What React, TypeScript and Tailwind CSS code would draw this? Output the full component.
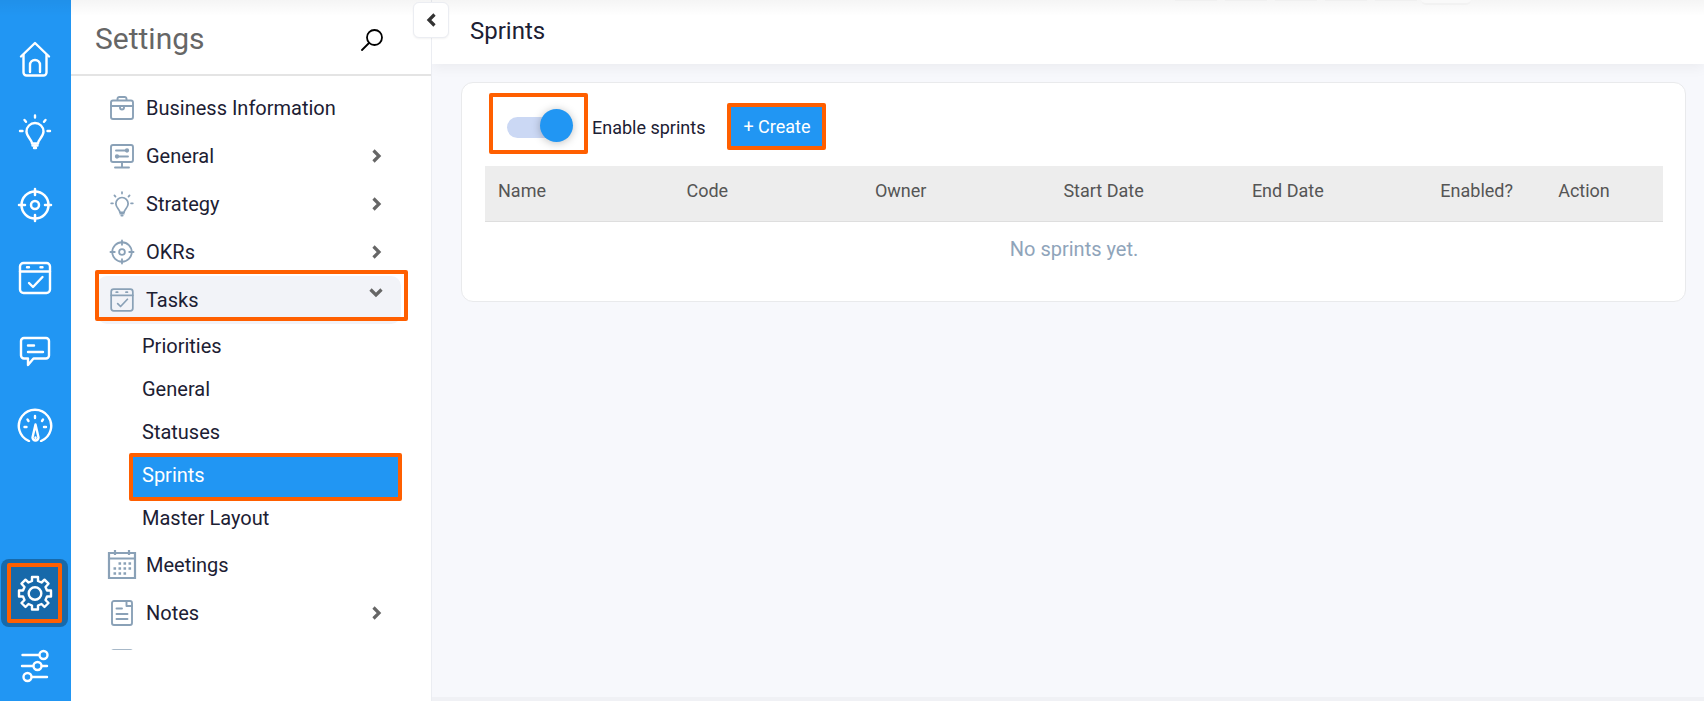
import React, { useState } from 'react';
import clsx from 'clsx';

type IconProps = { className?: string };

const stroke = {
  fill: 'none',
  stroke: 'currentColor',
  strokeLinecap: 'round' as const,
  strokeLinejoin: 'round' as const,
};

function HomeIcon({ className }: IconProps) {
  return (
    <svg viewBox="0 0 36 36" className={className} {...stroke} strokeWidth="2.4" aria-hidden="true">
      <path d="M4 15.5 18 2l14 13.5" />
      <path d="M6.5 14v17.500a3 3 0 0 0 3 3h17a3 3 0 0 0 3-3V14" />
      <path d="M13 31V24a5 5 0 0 1 10 0v7" />
    </svg>
  );
}

function BulbIcon({ className }: IconProps) {
  return (
    <svg viewBox="0 0 36 36" className={className} {...stroke} strokeWidth="2.4" aria-hidden="true">
      <path d="M15 29.5c0-4-5.500-6.500-5.500-12a8.500 8.500 0 0 1 17 0c0 5.500-5.500 8-5.500 12z" />
      <path d="M15.500 31.500h5M17 34h2" />
      <path d="M18 1.500v2M7.500 6l1.500 1.800M28.500 6 27 7.800M3 17h2.500M30.500 17H33" />
    </svg>
  );
}

function TargetIcon({ className }: IconProps) {
  return (
    <svg viewBox="0 0 36 36" className={className} {...stroke} strokeWidth="2.5" aria-hidden="true">
      <circle cx="18" cy="18" r="13.5" />
      <circle cx="18" cy="18" r="4" />
      <path d="M18 2v6M18 28v6M2 18h6M28 18h6" />
    </svg>
  );
}

function TaskIcon({ className }: IconProps) {
  return (
    <svg viewBox="0 0 36 36" className={className} {...stroke} strokeWidth="2.4" aria-hidden="true">
      <rect x="3" y="3" width="30" height="30" rx="3.5" />
      <path d="M3 11.500h30M10 7.200h2M23.500 7.200h2" />
      <path d="m12 23 4 4 9.500-10" />
    </svg>
  );
}

function ChatIcon({ className }: IconProps) {
  return (
    <svg viewBox="0 0 36 36" className={className} {...stroke} strokeWidth="2.4" aria-hidden="true">
      <path d="M7 5h22a3 3 0 0 1 3 3v14.500a3 3 0 0 1-3 3H16.500L11 32v-6.500H7a3 3 0 0 1-3-3V8a3 3 0 0 1 3-3z" />
      <path d="M11 12.500h6M11 19h15" />
    </svg>
  );
}

function GaugeIcon({ className }: IconProps) {
  return (
    <svg viewBox="0 0 36 36" className={className} {...stroke} strokeWidth="2.4" aria-hidden="true">
      <path d="M12 35a16.200 16.200 0 1 1 12 0" />
      <path d="M18.500 18.500 15.500 31.500a3 3 0 1 0 6 0z" />
      <path d="M18.500 31.500v.5" />
      <path d="M18 10v2M10.500 13.500l1 1.500M26 13.500l-1 1.500M7.500 21h2M27 21h2" />
    </svg>
  );
}

function GearIcon({ className }: IconProps) {
  return (
    <svg viewBox="0 0 36 36" className={className} {...stroke} strokeWidth="2.4" aria-hidden="true">
      <path d="M15 2h6v4l3.500 1.500 3-2.800 4 4L28.500 12l1.500 3.500h4v6h-4L28.500 25l3 3-4 4-3-3-3.500 1.500v4h-6v-4L11.500 29l-3 3-4-4 3-3L6 21.500H2v-6h4L7.500 12l-3-3.300 4-4 3 2.800L15 6z" />
      <circle cx="18" cy="18.5" r="6.3" />
    </svg>
  );
}

function SlidersIcon({ className }: IconProps) {
  return (
    <svg viewBox="0 0 36 36" className={className} {...stroke} strokeWidth="2.4" aria-hidden="true">
      <path d="M5.500 7H22M5 18h11M25 18h5M15 29h15" />
      <circle cx="26.500" cy="7" r="4" />
      <circle cx="20.500" cy="18" r="4" />
      <circle cx="10.500" cy="29" r="4" />
    </svg>
  );
}

function BriefcaseIcon({ className }: IconProps) {
  return (
    <svg viewBox="0 0 26 26" className={className} {...stroke} strokeWidth="1.9" aria-hidden="true">
      <rect x="2" y="5.5" width="22" height="18.5" rx="2" />
      <path d="M8.500 5V3.800A1.800 1.800 0 0 1 10.300 2h5.400a1.800 1.800 0 0 1 1.800 1.800V5M2 11h22" />
      <path d="M11 11v1.500a2 2 0 0 0 4 0V11" />
    </svg>
  );
}

function MonitorIcon({ className }: IconProps) {
  return (
    <svg viewBox="0 0 26 26" className={className} {...stroke} strokeWidth="1.9" aria-hidden="true">
      <rect x="2" y="2" width="22" height="17" rx="2" />
      <path d="M13 19v5M6 24.500h14M7 7.500h10M9 13.500h10" />
      <circle cx="18" cy="7.5" r="1.200" fill="currentColor" />
      <circle cx="8" cy="13.5" r="1.200" fill="currentColor" />
    </svg>
  );
}

function CalendarIcon({ className }: IconProps) {
  return (
    <svg viewBox="0 0 30 30" className={className} fill="none" stroke="currentColor" strokeWidth="2.2" aria-hidden="true">
      <path d="M2 3h26v25H2zM2 8.500h26M8 0v5M22 0v5" />
      <path
        strokeWidth="2.600"
        strokeDasharray="2.600 2.400"
        d="M11.500 13.500h13M6.500 18.500h18M6.500 23.500h13"
      />
    </svg>
  );
}

function NoteIcon({ className }: IconProps) {
  return (
    <svg viewBox="0 0 26 26" className={className} {...stroke} strokeWidth="1.9" aria-hidden="true">
      <path d="M5 1h16a2 2 0 0 1 2 2v20a2 2 0 0 1-2 2H5a2 2 0 0 1-2-2V3a2 2 0 0 1 2-2z" />
      <path d="M17.500 1.500V6H23M7.500 8.500h5.500M7.500 14h11M7.500 19h11" />
    </svg>
  );
}

function SearchIcon({ className }: IconProps) {
  return (
    <svg viewBox="0 0 22 22" className={className} {...stroke} strokeWidth="1.8" aria-hidden="true">
      <circle cx="13.500" cy="8.500" r="7.500" />
      <path d="m8 14-7 7" />
    </svg>
  );
}

function Chevron({ className }: IconProps) {
  return (
    <svg viewBox="0 0 10 14" className={className} fill="none" stroke="currentColor" strokeWidth="3.2" aria-hidden="true">
      <path d="M1.500 1.500 7 7l-5.500 5.500" />
    </svg>
  );
}

const railItems = [
  { label: 'Home', icon: HomeIcon },
  { label: 'Strategy', icon: BulbIcon },
  { label: 'OKRs', icon: TargetIcon },
  { label: 'Tasks', icon: TaskIcon },
  { label: 'Meetings', icon: ChatIcon },
  { label: 'Dashboards', icon: GaugeIcon },
];

const taskItems = ['Priorities', 'General', 'Statuses', 'Sprints', 'Master Layout'];

const columns = ['Name', 'Code', 'Owner', 'Start Date', 'End Date', 'Enabled?', 'Action'];

function Rail() {
  return (
    <nav aria-label="Main" className="flex w-[71px] shrink-0 flex-col justify-between bg-[#2196f3] pt-[22px] text-white">
      <div className="flex flex-col">
        {railItems.map(({ label, icon: Icon }) => (
          <a key={label} href="#" aria-label={label} className="flex h-[73px] items-center justify-center pr-[2px]">
            <Icon className="size-9" />
          </a>
        ))}
      </div>
      <div className="flex flex-col">
        <a href="#" aria-label="Settings" className="ml-px flex h-[68px] w-[67px] items-center justify-center rounded-lg bg-[#1769aa]">
          <span className="flex h-[60px] w-[55px] items-center justify-center rounded-xs border-4 border-[#ff5f00]">
            <GearIcon className="size-9 shrink-0" />
          </span>
        </a>
        <a href="#" aria-label="Preferences" className="flex h-[74px] items-center justify-center pt-1 pr-[2px]">
          <SlidersIcon className="size-9" />
        </a>
      </div>
    </nav>
  );
}

type MenuItemProps = {
  label: string;
  icon: React.ComponentType<IconProps>;
  arrow?: boolean;
};

function MenuItem({ label, icon: Icon, arrow }: MenuItemProps) {
  return (
    <li>
      <a href="#" className="flex h-12 items-center pr-[19px] pl-[10px]">
        <span className="flex w-[30px] shrink-0 justify-center text-[#8aa1b7]">
          <Icon className={label === 'Meetings' ? 'size-[30px]' : 'size-[26px]'} />
        </span>
        <span className="ml-[9px] grow">{label}</span>
        {arrow && <Chevron className="h-[14px] w-[10px] text-[#666]" />}
      </a>
    </li>
  );
}

function Sidebar() {
  return (
    <aside className="relative w-[361px] shrink-0 border-r border-[#ebedf2] bg-white text-xl text-[#1c2033]">
      <div className="flex h-[76px] items-center justify-between border-b-2 border-[#e4e4e4] pt-1 pr-12 pl-6">
        <h2 className="text-3xl text-[#666]">Settings</h2>
        <button type="button" aria-label="Search" className="mt-[2px] text-black">
          <SearchIcon className="size-[22px]" />
        </button>
      </div>
      <ul className="h-[574px] overflow-hidden pt-2 pr-[30px] pl-[26px]">
        <MenuItem label="Business Information" icon={BriefcaseIcon} />
        <MenuItem label="General" icon={MonitorIcon} arrow />
        <MenuItem label="Strategy" icon={BulbIcon} arrow />
        <MenuItem label="OKRs" icon={TargetIcon} arrow />
        <li>
          <div className="relative">
            <a href="#" aria-expanded="true" className="flex h-12 items-center rounded-[10px] bg-[#f2f3f8] pr-5 pl-[10px]">
              <span className="flex w-[30px] shrink-0 justify-center text-[#8aa1b7]">
                <TaskIcon className="size-[26px]" />
              </span>
              <span className="ml-[9px] grow">Tasks</span>
              <Chevron className="mb-[14px] h-[14px] w-[10px] rotate-90 text-[#666]" />
            </a>
            <span className="pointer-events-none absolute -top-[6px] -right-[7px] bottom-[3px] -left-[2px] rounded-xs border-4 border-[#ff5f00]" />
          </div>
          <ul className="pb-[2px] pl-8">
            {taskItems.map((item) => (
              <li key={item} className="h-[43px]">
                <a
                  href="#"
                  className={clsx(
                    'flex items-center',
                    item === 'Sprints'
                      ? '-mr-px h-12 rounded-xs border-4 border-[#ff5f00] bg-[#2196f3] pb-1 pl-[9px] text-white'
                      : 'h-[43px] pl-[13px]'
                  )}
                >
                  {item}
                </a>
              </li>
            ))}
          </ul>
        </li>
        <MenuItem label="Meetings" icon={CalendarIcon} />
        <MenuItem label="Notes" icon={NoteIcon} arrow />
        <li>
          <a href="#" aria-label="Templates" className="flex h-12 items-center pl-3 text-[#8aa1b7]">
            <TaskIcon className="size-[26px]" />
          </a>
        </li>
      </ul>
      <button
        type="button"
        aria-label="Collapse menu"
        className="absolute top-[2px] -right-[18px] z-10 flex size-9 items-center justify-center rounded-md border border-[#ebedf2] bg-white text-[#333] shadow-xs"
      >
        <Chevron className="h-[14px] w-[10px] rotate-180" />
      </button>
    </aside>
  );
}

function SprintTable() {
  return (
    <table className="w-full table-fixed text-left">
      <thead>
        <tr className="h-[55px] border-b border-[#dedede] bg-[#ededed] text-lg text-[#555]">
          {columns.map((column, i) => (
            <th key={column} scope="col" className={clsx('pb-1 pl-[13px] font-normal', i < 5 ? 'w-[16%]' : 'w-[10%]')}>
              {column}
            </th>
          ))}
        </tr>
      </thead>
      <tbody>
        <tr>
          <td colSpan={columns.length} className="h-14 text-center text-xl text-[#8fa4ba]">
            No sprints yet.
          </td>
        </tr>
      </tbody>
    </table>
  );
}

function App() {
  const [enabled, setEnabled] = useState(true);

  return (
    <div className="relative flex min-h-screen overflow-hidden bg-[#f7f8fc] font-[Roboto,sans-serif] text-[#1c2033]">
      <Rail />
      <Sidebar />
      <main className="flex min-w-0 grow flex-col">
        <header className="flex h-16 items-center bg-white pb-[2px] pl-[38px] shadow-[0_4px_12px_rgba(0,0,0,0.05)]">
          <h1 className="text-2xl">Sprints</h1>
        </header>
        <section className="mt-[18px] mr-[18px] ml-[29px] rounded-xl border border-[#e9eaec] bg-white pt-[10px] pr-[22px] pb-6 pl-[23px]">
          <div className="mb-3 flex items-center">
            <span className="ml-1 flex h-[61px] w-[99px] items-center rounded-xs border-4 border-[#ff5f00] pt-2 pl-[14px]">
              <input
                id="enable-sprints"
                type="checkbox"
                role="switch"
                checked={enabled}
                onChange={(e) => setEnabled(e.target.checked)}
                className="relative h-[21px] w-[62px] appearance-none rounded-full bg-[#cbd8f4] before:absolute before:-top-2 before:left-0 before:size-[33px] before:rounded-full before:bg-white before:shadow-[0_1px_8px_rgba(0,0,0,0.25)] checked:before:left-[33px] checked:before:bg-[#2196f3]"
              />
            </span>
            <label htmlFor="enable-sprints" className="ml-1 pt-2 text-lg">
              Enable sprints
            </label>
            <button
              type="button"
              className="mt-[6px] ml-[22px] flex h-[47px] w-[99px] items-center justify-center rounded-xs border-4 border-[#ff5f00] bg-[#2196f3] text-lg text-white"
            >
              + Create
            </button>
          </div>
          <SprintTable />
        </section>
        <div className="mt-auto h-1 bg-[#f0f1f5]" />
      </main>
      {/* lower edge of the top bar and the shade it casts */}
      <div className="pointer-events-none absolute inset-x-0 top-0 h-4 bg-linear-to-b from-black/4 to-transparent" />
      <div className="pointer-events-none absolute top-0 right-[233px] flex gap-2">
        {[0, 1, 2, 3, 4].map((tab) => (
          <span key={tab} className="h-px w-[42px] bg-[#f0f0f0]" />
        ))}
        <span className="-ml-1 h-[5px] w-[50px] rounded-b-md border-b-2 border-[#f2f2f2] bg-[#f9f9f9]" />
      </div>
    </div>
  );
}

export default App;
